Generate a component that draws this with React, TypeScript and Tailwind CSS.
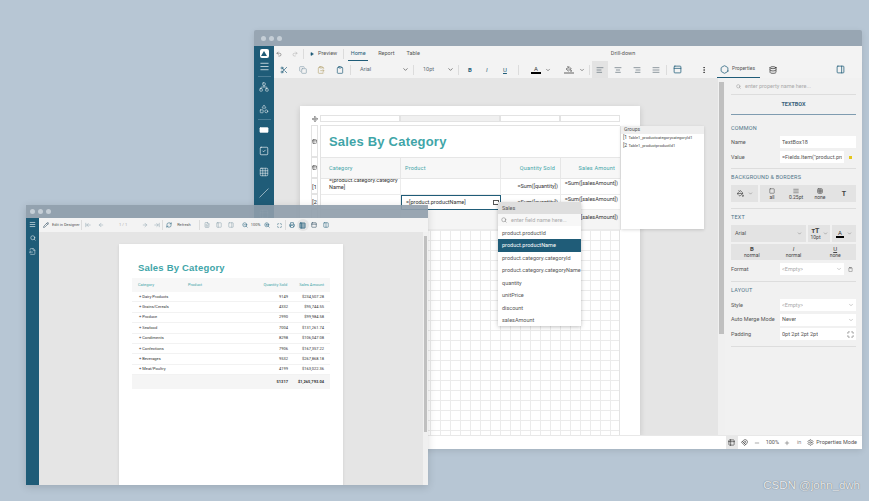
import {
  AlignCenter,
  AlignJustify,
  AlignLeft,
  AlignRight,
  ArrowLeft,
  ArrowRight,
  ArrowRightToLine,
  ArrowLeftToLine,
  ChevronDown,
  Clipboard,
  ClipboardPaste,
  Copy,
  Database,
  EllipsisVertical,
  FileOutput,
  FileText,
  Grid3x3,
  Magnet,
  Maximize,
  Menu,
  Minus,
  Move,
  Network,
  PaintBucket,
  PanelRight,
  Pencil,
  Play,
  Plus,
  Printer,
  RefreshCw,
  Scissors,
  Search,
  Settings,
  SquareCheck,
  Table2,
  Undo2,
  Redo2,
  ZoomIn,
  ZoomOut,
  Slash,
  Hexagon,
  RectangleHorizontal,
  Shapes,
  Square,
  Equal,
  PanelLeft,
  PanelTop,
  Columns2,
} from "lucide-react";

const font = "font-['Roboto','Liberation_Sans',sans-serif]";

function Sep({ className = "" }: { className?: string }) {
  return <div className={`w-px h-[10px] bg-[#dcdcdc] shrink-0 ${className}`} />;
}

function Line() {
  return <div className="h-px bg-[#dddddd]" />;
}

function SectionTitle({ children }: { children: string }) {
  return <div className="text-[5.5px] leading-[7px] text-[#4d7488] tracking-[0.2px]">{children}</div>;
}

function Field({ label, value, width = "w-[76px]", muted, chevron, icon }: { label: string; value: string; width?: string; muted?: boolean; chevron?: boolean; icon?: boolean }) {
  return (
    <div className="flex items-center h-[12px]">
      <div className="w-[49px] text-[5.5px] text-[#555] whitespace-nowrap">{label}</div>
      <div className={`${width} h-[12px] bg-white flex items-center justify-between px-[2px] ${muted ? "text-[#aaa]" : "text-[#555]"} text-[5.5px] overflow-hidden whitespace-nowrap`}>
        <span className="overflow-hidden">{value}</span>
        {chevron && <ChevronDown size={6} className="text-[#999] shrink-0" />}
        {icon && <Maximize size={7} className="text-[#555] shrink-0" />}
      </div>
    </div>
  );
}

function PropBtn({ icon, label }: { icon: React.ReactNode; label: string }) {
  return (
    <div className="flex-1 flex flex-col items-center justify-center text-[5px] leading-[6px] text-[#444]">
      {icon}
      <span>{label}</span>
    </div>
  );
}

function PropertiesPanel() {
  return (
    <div className={`w-[137px] shrink-0 bg-[#f1f1f1] px-[6px] ${font}`}>
      <div className="h-[17px] flex items-center gap-[4px] pl-[5px] border-b border-[#dddddd] text-[5.5px] text-[#aaa]">
        <Search size={5} className="text-[#888]" />
        <span>enter property name here...</span>
      </div>
      <div className="h-[20px] flex items-center justify-center border-b border-[#7f9cb0] text-[5.5px] font-bold text-[#38627a]">TEXTBOX</div>
      <div className="mt-[10px] flex flex-col gap-[3px]">
        <SectionTitle>COMMON</SectionTitle>
        <div className="mt-[1px]"><Field label="Name" value="TextBox18" /></div>
        <div className="flex items-center">
          <Field label="Value" value="=Fields.Item(&quot;product.prod" width="w-[64px]" />
          <div className="ml-[5px] size-[3px] bg-[#e4c61c]" />
        </div>
      </div>
      <div className="mt-[5px]"><Line /></div>
      <div className="mt-[5px]"><SectionTitle>BACKGROUND &amp; BORDERS</SectionTitle></div>
      <div className="mt-[4px] flex gap-[2px] h-[17px]">
        <div className="w-[27px] bg-[#e3e3e3] flex items-center justify-center gap-[4px]">
          <PaintBucket size={7} className="text-[#333]" />
          <ChevronDown size={5} className="text-[#666]" />
        </div>
        <div className="flex-1 bg-[#e3e3e3] flex">
          <PropBtn icon={<Square size={6} />} label="all" />
          <PropBtn icon={<AlignJustify size={6} />} label="0.25pt" />
          <PropBtn icon={<Grid3x3 size={6} />} label="none" />
          <PropBtn icon={<span className="font-bold text-[7px] leading-[6px]">T</span>} label="" />
        </div>
      </div>
      <div className="mt-[6px]"><Line /></div>
      <div className="mt-[5px]"><SectionTitle>TEXT</SectionTitle></div>
      <div className="mt-[4px] flex gap-[2px] h-[17px]">
        <div className="w-[75px] bg-[#e3e3e3] flex items-center justify-between px-[4px] text-[5.5px] text-[#555]">
          <span>Arial</span>
          <ChevronDown size={5} className="text-[#666]" />
        </div>
        <div className="w-[22px] bg-[#e3e3e3] flex items-center justify-center gap-[2px]">
          <div className="flex flex-col items-center text-[5px] leading-[6px] text-[#444]">
            <span className="font-bold text-[7px] leading-[6px]">тT</span>
            <span>10pt</span>
          </div>
          <ChevronDown size={5} className="text-[#666]" />
        </div>
        <div className="flex-1 bg-[#e3e3e3] flex items-center justify-center gap-[3px]">
          <div className="flex flex-col items-center text-[6px] leading-[6px] text-[#333]">
            <span>A</span>
            <div className="w-[8px] h-[2px] bg-black" />
          </div>
          <ChevronDown size={5} className="text-[#666]" />
        </div>
      </div>
      <div className="mt-[2px] h-[16px] bg-[#e3e3e3] flex">
        <PropBtn icon={<span className="font-bold text-[6px] leading-[6px]">B</span>} label="normal" />
        <PropBtn icon={<span className="italic text-[6px] leading-[6px]">I</span>} label="normal" />
        <PropBtn icon={<span className="underline text-[6px] leading-[6px]">U</span>} label="none" />
      </div>
      <div className="mt-[3px] flex items-center">
        <Field label="Format" value="<Empty>" width="w-[64px]" muted chevron />
        <Clipboard size={5} className="ml-[4px] text-[#555]" />
      </div>
      <div className="mt-[6px]"><Line /></div>
      <div className="mt-[5px]"><SectionTitle>LAYOUT</SectionTitle></div>
      <div className="mt-[5px] flex flex-col gap-[2.5px]">
        <Field label="Style" value="<Empty>" muted chevron />
        <Field label="Auto Merge Mode" value="Never" chevron />
        <Field label="Padding" value="0pt 2pt 2pt 2pt" icon />
      </div>
      <div className="mt-[6px]"><Line /></div>
    </div>
  );
}

const headCell = "flex items-center text-[5.5px] text-[#3fa5a8] bg-[#f7f7f7] border-r border-b border-[#e6e6e6] tracking-[0.2px]";
const bodyCell = "border-r border-b border-[#ececec] text-[5.5px] leading-[6.5px] text-[#333] overflow-hidden";

function Handle({ className, children }: { className: string; children?: React.ReactNode }) {
  return (
    <div className={`w-[7px] border border-[#e3e3e3] bg-white flex items-center justify-center text-[6px] text-[#333] overflow-hidden ${className}`}>
      {children}
    </div>
  );
}

function SumCell({ text, className = "" }: { text: string; className?: string }) {
  return <div className={`${bodyCell} text-right pt-[1px] pr-[2px] pl-[3px] break-all ${className}`}>{text}</div>;
}

function DesignerPage() {
  return (
    <div className={`w-[340px] h-[329px] bg-white shadow-[0_2px_6px_rgba(0,0,0,0.15)] pt-[9px] pl-[11px] ${font}`}>
      <div className="flex h-[7px] gap-[2px]">
        <div className="w-[7px] flex items-center justify-center"><Move size={6} className="text-[#333]" /></div>
        <div className="flex">
          <div className="w-[80px] border border-[#e3e3e3]" />
          <div className="w-[100px] bg-[#f0f0f0] border border-[#e3e3e3]" />
          <div className="w-[60px] border border-[#e3e3e3]" />
          <div className="w-[60px] border border-[#e3e3e3]" />
        </div>
      </div>
      <div className="flex gap-[2px] mt-[3px]">
        <div className="flex flex-col">
          <Handle className="h-[32px]"><Table2 size={5} /></Handle>
          <Handle className="h-[21px]"><Table2 size={5} /></Handle>
          <Handle className="h-[16px]">[1</Handle>
          <Handle className="h-[15px]">[2</Handle>
          <Handle className="h-[20px]" />
        </div>
        <div className="w-[300px]">
          <div className="grid grid-cols-[80px_100px_60px_60px] grid-rows-[32px_21px_16px_15px_20px] border-l border-t border-[#e3e3e3] w-[300px]">
            <div className="col-span-4 flex items-center pl-[8px] border-r border-b border-[#e6e6e6] text-[13px] font-['Liberation_Sans',sans-serif] font-bold tracking-[0.2px] text-[#3fa5a8]">Sales By Category</div>
            <div className={`${headCell} pl-[8px]`}>Category</div>
            <div className={`${headCell} pl-[4px]`}>Product</div>
            <div className={`${headCell} justify-end pr-[5px]`}>Quantity Sold</div>
            <div className={`${headCell} justify-end pr-[5px]`}>Sales Amount</div>
            <div className={`${bodyCell} pl-[8px] pr-[1px] break-all -indent-0`}><div className="-mt-[2px]">=[product.category.categoryName]</div></div>
            <div className={bodyCell} />
            <SumCell text="=Sum([quantity])" className="pt-[4px]" />
            <SumCell text="=Sum([salesAmount])" />
            <div className={bodyCell} />
            <div className="border border-[#1f5c78] flex items-center justify-between pl-[4px] pr-[1px] text-[5.5px] text-[#333]">
              <span>=[product.productName]</span>
              <div className="w-[6px] h-[5px] border border-[#555]" />
            </div>
            <SumCell text="=Sum([quantity])" className="pt-[4px]" />
            <SumCell text="=Sum([salesAmount])" />
            <div className={`${bodyCell} bg-[#f5f5f5]`} />
            <div className={`${bodyCell} bg-[#f5f5f5]`} />
            <SumCell text="=Sum([quantity])" className="bg-[#f5f5f5] pt-[6px]" />
            <SumCell text="=Sum([salesAmount])" className="bg-[#f5f5f5] pt-[4px]" />
          </div>
          <div className="h-[206px] w-[300px] border-r border-[#e3e3e3] bg-[linear-gradient(#ebebeb_1px,transparent_1px),linear-gradient(90deg,#ebebeb_1px,transparent_1px)] bg-[size:10px_10px]" />
        </div>
      </div>
    </div>
  );
}

const fields = ["product.productId", "product.productName", "product.category.categoryId", "product.category.categoryName", "quantity", "unitPrice", "discount", "salesAmount"];

function FieldDropdown() {
  return (
    <div className={`absolute left-[498px] top-[202px] w-[83px] h-[124px] bg-white shadow-[0_1px_4px_rgba(0,0,0,0.25)] ${font}`}>
      <div className="h-[12px] bg-[#dedede] flex items-center pl-[4px] text-[5.5px] text-[#555]">Sales</div>
      <div className="h-[12px] bg-[#f7f7f7] flex items-center gap-[4px] pl-[3px] text-[5.5px] text-[#aaa]">
        <Search size={6} className="text-[#777]" />
        <span>enter field name here...</span>
      </div>
      <div className="mt-[0.5px]">
        {fields.map((f, i) => (
          <div key={f} className={`h-[12.5px] flex items-center pl-[4px] text-[5.5px] whitespace-nowrap ${i === 1 ? "bg-[#1f5c78] text-white" : "text-[#555]"}`}>{f}</div>
        ))}
      </div>
    </div>
  );
}

function GroupsPanel() {
  return (
    <div className={`absolute left-[621px] top-[126px] w-[83px] h-[103px] bg-white shadow-[0_1px_3px_rgba(0,0,0,0.15)] ${font}`}>
      <div className="h-[8px] bg-[#efefef] flex items-center pl-[3px] text-[5px] text-[#555]">Groups</div>
      <div className="pl-[2px] pt-[1px] flex flex-col gap-[3px] text-[4px] leading-[5px] text-[#444] whitespace-nowrap">
        <div><span className="text-[5px]">[1 </span>Table1_productcategorycategoryId1</div>
        <div><span className="text-[5px]">[2 </span>Table1_productproductId1</div>
      </div>
    </div>
  );
}

function DesignerWindow() {
  return (
    <div className={`absolute left-[254px] top-[30px] w-[608px] h-[419px] flex flex-col rounded-t-[2px] shadow-[0_2px_6px_rgba(0,0,0,0.1)] ${font}`}>
      <div className="h-[16px] shrink-0 bg-[#98a6b3] rounded-t-[2px] flex items-center gap-[3px] pl-[7px]">
        <div className="size-[5px] rounded-full bg-[#c5ced6]" />
        <div className="size-[5px] rounded-full bg-[#c5ced6]" />
        <div className="size-[5px] rounded-full bg-[#c5ced6]" />
      </div>
      <div className="flex-1 flex min-h-0">
        <div className="w-[20px] shrink-0 bg-[#1f5c78] flex flex-col items-center text-white">
          <div className="mt-[3px] size-[9px] bg-white rounded-[2px] flex items-center justify-center">
            <div className="w-0 h-0 border-l-[3px] border-r-[3px] border-b-[5px] border-l-transparent border-r-transparent border-b-[#1f5c78]" />
          </div>
          <Menu size={11} className="mt-[3px]" strokeWidth={1.5} />
          <div className="mt-[4px] w-[13px] h-px bg-[#4b7d95]" />
          <Network size={10} className="mt-[5px]" strokeWidth={1.25} />
          <Shapes size={10} className="mt-[12px]" strokeWidth={1.25} />
          <div className="mt-[5px] w-[13px] h-px bg-[#4b7d95]" />
          <RectangleHorizontal size={10} className="mt-[5px] fill-white" strokeWidth={1} />
          <SquareCheck size={10} className="mt-[11px]" strokeWidth={1.5} />
          <Grid3x3 size={10} className="mt-[11px]" strokeWidth={1.25} />
          <Slash size={10} className="mt-[11px]" strokeWidth={1.25} />
          <Table2 size={10} className="mt-[11px] opacity-40" strokeWidth={1.25} />
        </div>
        <div className="flex-1 flex flex-col min-w-0">
          <div className="h-[15px] shrink-0 bg-[#f3f3f3] flex items-center text-[5.5px] text-[#555]">
            <Undo2 size={6} className="ml-[2px]" />
            <Redo2 size={6} className="ml-[10px] text-[#aaa]" />
            <Sep className="ml-[5px]" />
            <Play size={4} className="ml-[6px] fill-[#1f5c78] text-[#1f5c78]" />
            <span className="ml-[4px]">Preview</span>
            <Sep className="ml-[6px]" />
            <div className="ml-[4px] h-[15px] w-[20px] flex items-center justify-center border-b border-[#1f5c78] text-[#1f5c78]">Home</div>
            <span className="ml-[10px]">Report</span>
            <span className="ml-[12px]">Table</span>
            <span className="ml-[191px]">Drill-down</span>
          </div>
          <div className="h-[17px] shrink-0 bg-[#f3f3f3] flex items-center text-[#5c6b75] text-[5.5px] shadow-[0_1px_1px_rgba(0,0,0,0.05)]">
            <Scissors size={8} className="ml-[6px] text-[#1f5c78]" />
            <Copy size={8} className="ml-[11px] text-[#8aa0ad]" />
            <ClipboardPaste size={8} className="ml-[10px] text-[#b9a97a]" />
            <Clipboard size={8} className="ml-[11px] text-[#1f5c78]" />
            <Sep className="ml-[6px]" />
            <span className="ml-[9px] w-[42px]">Arial</span>
            <ChevronDown size={7} className="text-[#333]" />
            <Sep className="ml-[4px]" />
            <span className="ml-[9px] w-[24px]">10pt</span>
            <ChevronDown size={7} className="text-[#333]" />
            <Sep className="ml-[4px]" />
            <span className="ml-[9px] w-[8px] text-[6px] font-bold text-[#1f5c78]">B</span>
            <span className="ml-[10px] w-[8px] text-[6px] italic text-[#1f5c78]">I</span>
            <span className="ml-[9px] w-[8px] text-[6px] underline text-[#1f5c78]">U</span>
            <Sep className="ml-[7px]" />
            <div className="ml-[12px] flex flex-col items-center text-[6px] leading-[6px] text-[#333]">
              <span>A</span>
              <div className="w-[10px] h-[2px] bg-black" />
            </div>
            <ChevronDown size={6} className="ml-[4px] text-[#333]" />
            <div className="ml-[13px] flex flex-col items-center">
              <PaintBucket size={6} className="text-[#333]" />
              <div className="w-[10px] h-[2px] border border-[#aaa]" />
            </div>
            <ChevronDown size={6} className="ml-[5px] text-[#333]" />
            <Sep className="ml-[4px]" />
            <div className="ml-[2px] w-[16px] h-[17px] bg-[#e3e3e3] flex items-center justify-center"><AlignLeft size={8} /></div>
            <AlignCenter size={8} className="ml-[6px]" />
            <AlignRight size={8} className="ml-[11px]" />
            <AlignJustify size={8} className="ml-[11px]" />
            <Sep className="ml-[6px]" />
            <PanelTop size={9} className="ml-[6px] text-[#1f5c78]" />
            <EllipsisVertical size={8} className="ml-[18px] text-[#222]" />
            <div className="ml-[9px] w-[43px] h-[17px] flex items-center gap-[3px] pl-[3px] border-b border-[#1f5c78] text-[5px] text-[#555] whitespace-nowrap">
              <Hexagon size={9} className="text-[#1f5c78] shrink-0" />
              <span>Properties</span>
            </div>
            <Database size={8} className="ml-[9px] text-[#222]" />
            <PanelRight size={9} className="ml-[59px] text-[#1f5c78]" />
          </div>
          <div className="flex-1 flex min-h-0">
            <div className="flex-1 bg-[#e5e5e5] pl-[26px] pt-[28px] overflow-hidden">
              <DesignerPage />
            </div>
            <div className="w-[7px] shrink-0 bg-[#f0f0f0] pt-[4px] px-[1px]">
              <div className="h-[252px] bg-[#c0c0c0]" />
            </div>
            <PropertiesPanel />
          </div>
          <div className="h-[14px] shrink-0 bg-white flex items-center justify-end text-[5.5px] text-[#555] border-t border-[#e8e8e8]">
            <div className="w-[12px] h-[13px] bg-[#e8e8e8] flex items-center justify-center"><Table2 size={7} className="text-[#333]" /></div>
            <Magnet size={7} className="ml-[3px] text-[#222]" />
            <Minus size={6} className="ml-[6px]" />
            <span className="ml-[6px]">100%</span>
            <Plus size={6} className="ml-[5px]" />
            <span className="ml-[7px] text-[#888]">in</span>
            <Settings size={7} className="ml-[6px]" />
            <span className="ml-[2px] mr-[5px]">Properties Mode</span>
          </div>
        </div>
      </div>
    </div>
  );
}

const reportRows = [
  ["Dairy Products", "9149", "$234,507.28"],
  ["Grains/Cereals", "4332", "$95,744.55"],
  ["Produce", "2990", "$99,984.58"],
  ["Seafood", "7004", "$131,261.74"],
  ["Condiments", "8298", "$106,047.08"],
  ["Confections", "7906", "$167,357.22"],
  ["Beverages", "9532", "$267,868.18"],
  ["Meat/Poultry", "4199", "$163,022.36"],
];

function ReportPage() {
  return (
    <div className="w-[224px] h-[241px] bg-white shadow-[0_1px_3px_rgba(0,0,0,0.1)] pl-[13px] pt-[18px]">
      <div className="pl-[6px] h-[16px] text-[9.5px] leading-[12px] font-['Liberation_Sans',sans-serif] font-bold tracking-[0.2px] text-[#3fa5a8]">Sales By Category</div>
      <div className="w-[198px]">
        <div className="h-[14px] bg-[#f7f7f7] flex items-center text-[4px] text-[#3fa5a8]">
          <span className="ml-[6px] w-[50px]">Category</span>
          <span>Product</span>
          <span className="ml-auto">Quantity Sold</span>
          <span className="ml-[12px] mr-[6px]">Sales Amount</span>
        </div>
        {reportRows.map((r) => (
          <div key={r[0]} className="h-[10.4px] flex items-center border-b border-[#f2f2f2] text-[4px] text-[#333]">
            <span className="ml-[7px]">+ {r[0]}</span>
            <span className="ml-auto">{r[1]}</span>
            <span className="w-[36px] mr-[6px] text-right">{r[2]}</span>
          </div>
        ))}
        <div className="h-[14px] bg-[#f5f5f5] flex items-center text-[4px] font-bold text-[#333]">
          <span className="ml-auto">51317</span>
          <span className="w-[36px] mr-[6px] text-right">$1,265,793.04</span>
        </div>
      </div>
    </div>
  );
}

function ViewerWindow() {
  return (
    <div className={`absolute left-[26px] top-[205px] w-[402px] h-[280px] flex flex-col shadow-[0_2px_8px_rgba(0,0,0,0.15)] ${font}`}>
      <div className="h-[13px] shrink-0 bg-[#8f9dab]/90 flex items-center gap-[3px] pl-[4px]">
        <div className="size-[5px] rounded-full bg-[#c5ced6]" />
        <div className="size-[5px] rounded-full bg-[#c5ced6]" />
        <div className="size-[5px] rounded-full bg-[#c5ced6]" />
      </div>
      <div className="flex-1 flex min-h-0">
        <div className="w-[13px] shrink-0 bg-[#1f5c78] flex flex-col items-center text-white">
          <Menu size={7} className="mt-[3px]" strokeWidth={2} />
          <Search size={6} className="mt-[7px]" strokeWidth={2} />
          <FileOutput size={7} className="mt-[7px]" strokeWidth={1.5} />
        </div>
        <div className="flex-1 flex flex-col min-w-0">
          <div className="h-[14px] shrink-0 bg-[#f3f3f3] flex items-center text-[4px] text-[#555] shadow-[0_1px_1px_rgba(0,0,0,0.06)]">
            <Pencil size={6} className="ml-[4px] text-[#1f3f55]" />
            <span className="ml-[3px] w-[24px] whitespace-nowrap">Edit in Designer</span>
            <Sep className="ml-[5px]" />
            <ArrowLeftToLine size={6} className="ml-[3px] text-[#8aa0ad]" />
            <ArrowLeft size={6} className="ml-[7px] text-[#8aa0ad]" />
            <span className="ml-[15px] text-[#aaa]">1 / 1</span>
            <ArrowRight size={6} className="ml-[15px] text-[#8aa0ad]" />
            <ArrowRightToLine size={6} className="ml-[6px] text-[#8aa0ad]" />
            <Sep className="ml-[2px]" />
            <RefreshCw size={6} className="ml-[3px] text-[#1f5c78]" />
            <span className="ml-[5px]">Refresh</span>
            <Sep className="ml-[8px]" />
            <FileText size={6} className="ml-[4px] text-[#8aa0ad]" />
            <PanelLeft size={6} className="ml-[6px] text-[#8aa0ad]" />
            <PanelRight size={6} className="ml-[6px] text-[#8aa0ad]" />
            <ZoomOut size={6} className="ml-[8px] text-[#1f5c78]" />
            <span className="ml-[3px]">100%</span>
            <ZoomIn size={6} className="ml-[3px] text-[#1f5c78]" />
            <Maximize size={5} className="ml-[7px] text-[#1f5c78]" />
            <Sep className="ml-[3px]" />
            <Printer size={6} className="ml-[3px] text-[#1f5c78]" />
            <div className="ml-[2px] size-[12px] rounded-full bg-[#e5e5e5] flex items-center justify-center"><PanelLeft size={7} className="text-[#1f5c78] fill-[#1f5c78]/40" /></div>
            <PanelTop size={6} className="ml-[2px] text-[#1f3f55]" />
            <Columns2 size={6} className="ml-[6px] text-[#1f5c78]" />
          </div>
          <div className="flex-1 flex min-h-0">
            <div className="flex-1 bg-[#e5e5e5] pl-[80px] pt-[12px] overflow-hidden">
              <ReportPage />
            </div>
            <div className="w-[5px] shrink-0 bg-[#f0f0f0] pt-[4px] px-[1px]">
              <div className="h-[196px] bg-[#c0c0c0]" />
            </div>
          </div>
        </div>
      </div>
    </div>
  );
}

export default function App() {
  return (
    <div className="relative w-[869px] h-[501px] overflow-hidden bg-[#b7c6d4]">
      <DesignerWindow />
      <GroupsPanel />
      <FieldDropdown />
      <ViewerWindow />
      <div className="absolute right-[9px] bottom-[7px] font-['Liberation_Sans',sans-serif] text-[11.5px] text-[#e8edf2] [text-shadow:0_0_1px_#555]">CSDN @john_dwh</div>
    </div>
  );
}
